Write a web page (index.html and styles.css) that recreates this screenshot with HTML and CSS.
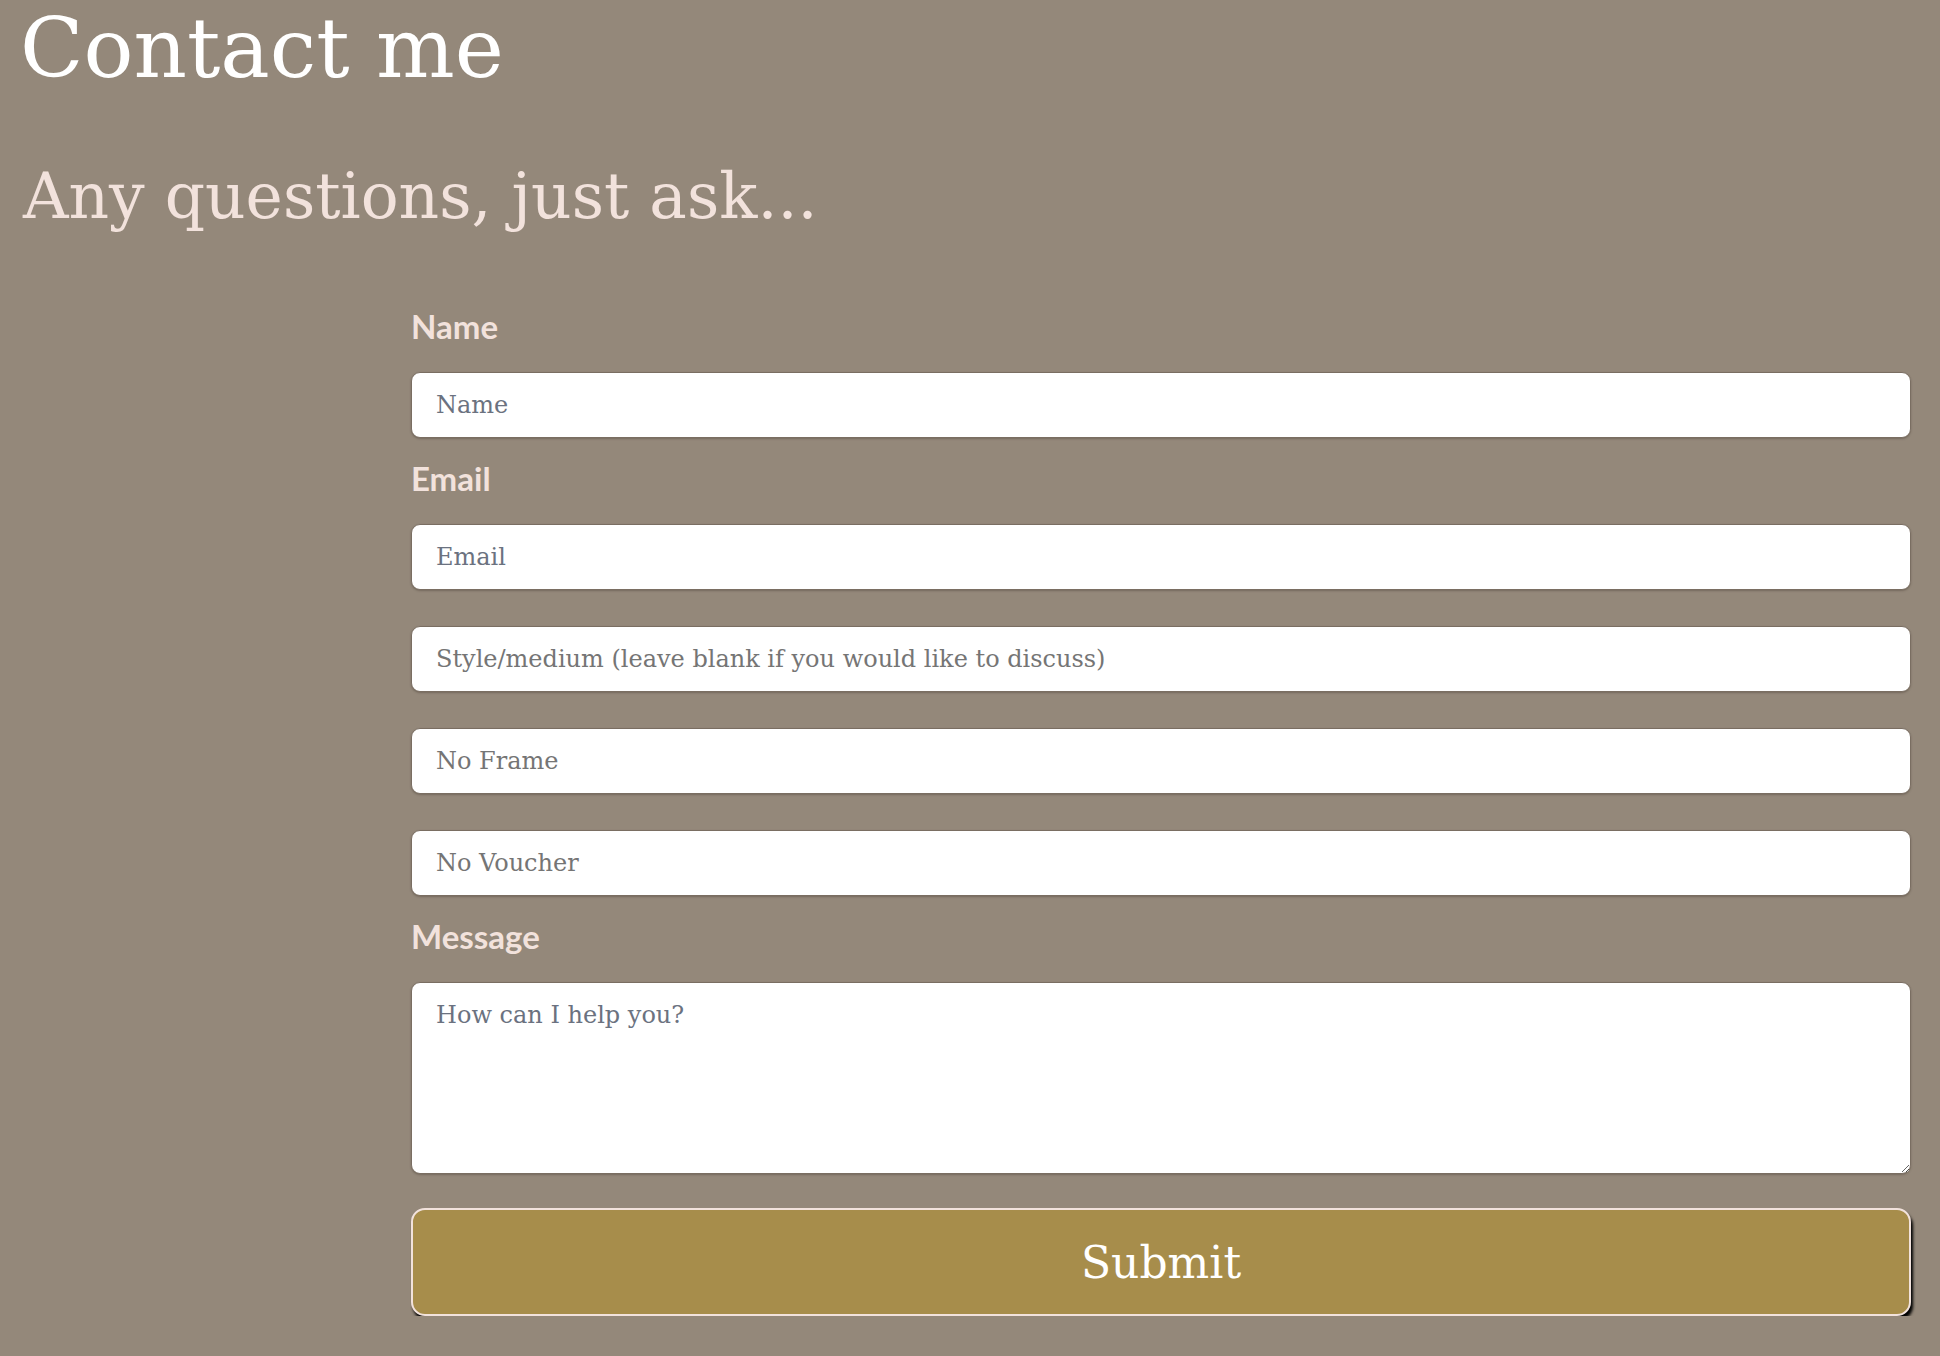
FILE: index.html
```html
<!DOCTYPE html>
<html lang="en">
<head>
<meta charset="utf-8">
<title>Contact me</title>
<link rel="stylesheet" href="styles.css">
</head>
<body>
<main class="page">
  <h1 class="title">Contact me</h1>
  <h2 class="subtitle">Any questions, just ask...</h2>
  <form class="contact-form">
    <label class="label" for="name">Name</label>
    <input class="field field--tw field--before-label" id="name" type="text" placeholder="Name">
    <label class="label" for="email">Email</label>
    <input class="field field--tw" id="email" type="email" placeholder="Email">
    <input class="field" type="text" placeholder="Style/medium (leave blank if you would like to discuss)">
    <input class="field" type="text" placeholder="No Frame">
    <input class="field field--before-label" type="text" placeholder="No Voucher">
    <label class="label" for="message">Message</label>
    <textarea class="field field--tw area" id="message" placeholder="How can I help you?"></textarea>
    <button class="submit" type="button">Submit</button>
  </form>
</main>
</body>
</html>
```
FILE: styles.css
```css
html, body {
  margin: 0;
  padding: 0;
  background: #94887a;
}

.page {
  padding: 7px 20px 0 20px;
}

.title {
  margin: 0;
  font-family: "DejaVu Serif", serif;
  font-weight: normal;
  font-size: 83px;
  line-height: 1;
  color: #ffffff;
}

.subtitle {
  margin: 75px 0 0 3px;
  font-family: "DejaVu Serif", serif;
  font-weight: normal;
  font-size: 63px;
  line-height: 1;
  color: #f2e2dc;
}

.contact-form {
  margin: 78px 0 0 391px;
  width: 1500px;
  display: flex;
  flex-direction: column;
}

.label {
  display: block;
  font-family: Lato, "Open Sans", sans-serif;
  font-weight: 700;
  font-size: 33px;
  line-height: 40px;
  color: #f2e2dc;
  margin-bottom: 26px;
}

.field {
  box-sizing: border-box;
  width: 100%;
  height: 66px;
  margin: 0 0 36px 0;
  padding: 0 24px;
  border: 1px solid #7a6e62;
  border-radius: 9px;
  background: #ffffff;
  box-shadow: 0 1px 2px rgba(60, 50, 40, 0.35);
  font-family: "DejaVu Serif", serif;
  font-size: 24px;
  color: #333333;
  outline: none;
}

.field::placeholder {
  color: #757575;
  opacity: 1;
}

.field--tw::placeholder {
  color: #6b7280;
}

.field--before-label {
  margin-bottom: 20px;
}

.area {
  height: 192px;
  padding: 18px 24px;
  margin-bottom: 34px;
  resize: vertical;
  line-height: normal;
}

.submit {
  box-sizing: border-box;
  width: 100%;
  height: 108px;
  border: 2px solid #f2e2dc;
  border-radius: 14px;
  background: #a78d4b;
  box-shadow: 2px 4px 3px #000000;
  font-family: "DejaVu Serif", serif;
  font-size: 44px;
  color: #ffffff;
  cursor: pointer;
}
```
